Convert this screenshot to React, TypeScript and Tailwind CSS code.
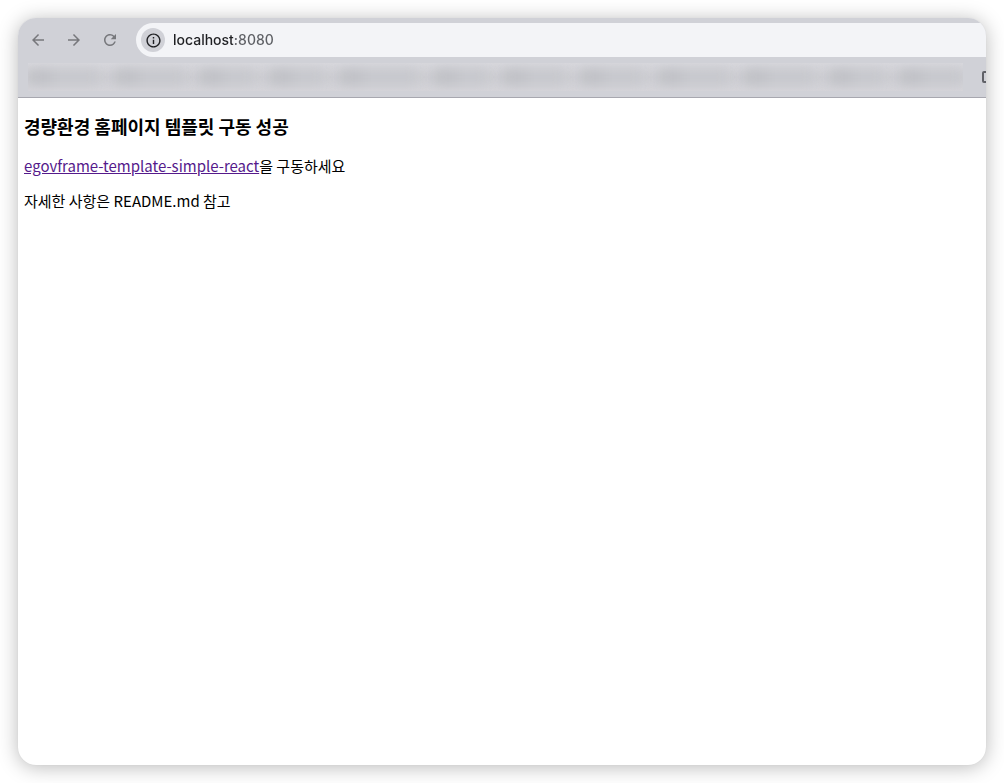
import React from 'react';
import { MdArrowBack, MdArrowForward, MdInfoOutline, MdRefresh } from 'react-icons/md';

const bookmarkWidths = [
  'w-18',
  'w-18',
  'w-14',
  'w-14',
  'w-20',
  'w-14',
  'w-16',
  'w-16',
  'w-18',
  'w-18',
  'w-14',
  'w-16',
];

const NavButtons: React.FC = () => (
  <div className="flex items-center gap-[18px] text-[#77787c]">
    <button type="button" aria-label="Back">
      <MdArrowBack size={18} />
    </button>
    <button type="button" aria-label="Forward">
      <MdArrowForward size={18} />
    </button>
    <button type="button" aria-label="Reload">
      <MdRefresh size={18} />
    </button>
  </div>
);

const AddressBar: React.FC = () => (
  <div className="flex h-[34px] flex-1 items-center gap-2 rounded-l-full bg-[#f3f4f7] pl-[5px]">
    <button
      type="button"
      aria-label="Site information"
      className="flex size-6 items-center justify-center rounded-full bg-[#d0d1d7] text-[#1f2023]"
    >
      <MdInfoOutline size={17} />
    </button>
    {/* host is darker than the port */}
    <input
      type="text"
      aria-label="Address"
      defaultValue="localhost:8080"
      className="min-w-0 flex-1 bg-[linear-gradient(90deg,#1f2023_60px,#5c5e63_60px)] bg-clip-text font-['Inter','Liberation_Sans',sans-serif] text-sm font-medium text-transparent caret-black outline-none"
    />
  </div>
);

const BookmarksBar: React.FC = () => (
  <div className="flex items-center">
    <div className="ml-[10px] flex h-7 flex-1 items-center justify-between overflow-hidden bg-linear-to-b from-[#d8d8dd] via-[#cfcfd4] to-[#d6d5da]">
      {bookmarkWidths.map((width, index) => (
        <span key={index} className={`${width} flex h-4 blur-[6px]`}>
          <span className="w-6 bg-[#c0c1c6]" />
          <span className="flex-1 bg-[#c7c8cd]" />
        </span>
      ))}
    </div>
    <div className="ml-[19px] w-1 overflow-hidden">
      <span className="block h-3 w-3 rounded-[2px] border-2 border-[#606167]" />
    </div>
  </div>
);

const App: React.FC = () => {
  return (
    <div className="flex min-h-screen bg-white p-[18px]">
      <div className="flex flex-1 flex-col overflow-hidden rounded-[18px] bg-white shadow-[0_0_1px_rgba(0,0,0,0.1),0_2px_20px_rgba(0,0,0,0.28)]">
        <header className="border-b border-[#a7a7af] bg-[#d0d1d7]">
          <div className="flex items-center gap-[17px] pt-[5px] pl-[11px]">
            <NavButtons />
            <AddressBar />
          </div>
          <div className="pt-[6px] pb-[6px]">
            <BookmarksBar />
          </div>
        </header>

        <main className="flex flex-col gap-[11px] px-[6px] py-[14px] font-['Noto_Sans_CJK_KR',sans-serif] text-[15px] leading-6 text-black">
          <h3 className="mb-[3px] text-[18px] leading-7 font-bold">경량환경 홈페이지 템플릿 구동 성공</h3>
          <p>
            <a href="#" className="text-[#551a8b] underline">
              egovframe-template-simple-react
            </a>
            을 구동하세요
          </p>
          <p>자세한 사항은 README.md 참고</p>
        </main>
      </div>
    </div>
  );
};

export default App;
